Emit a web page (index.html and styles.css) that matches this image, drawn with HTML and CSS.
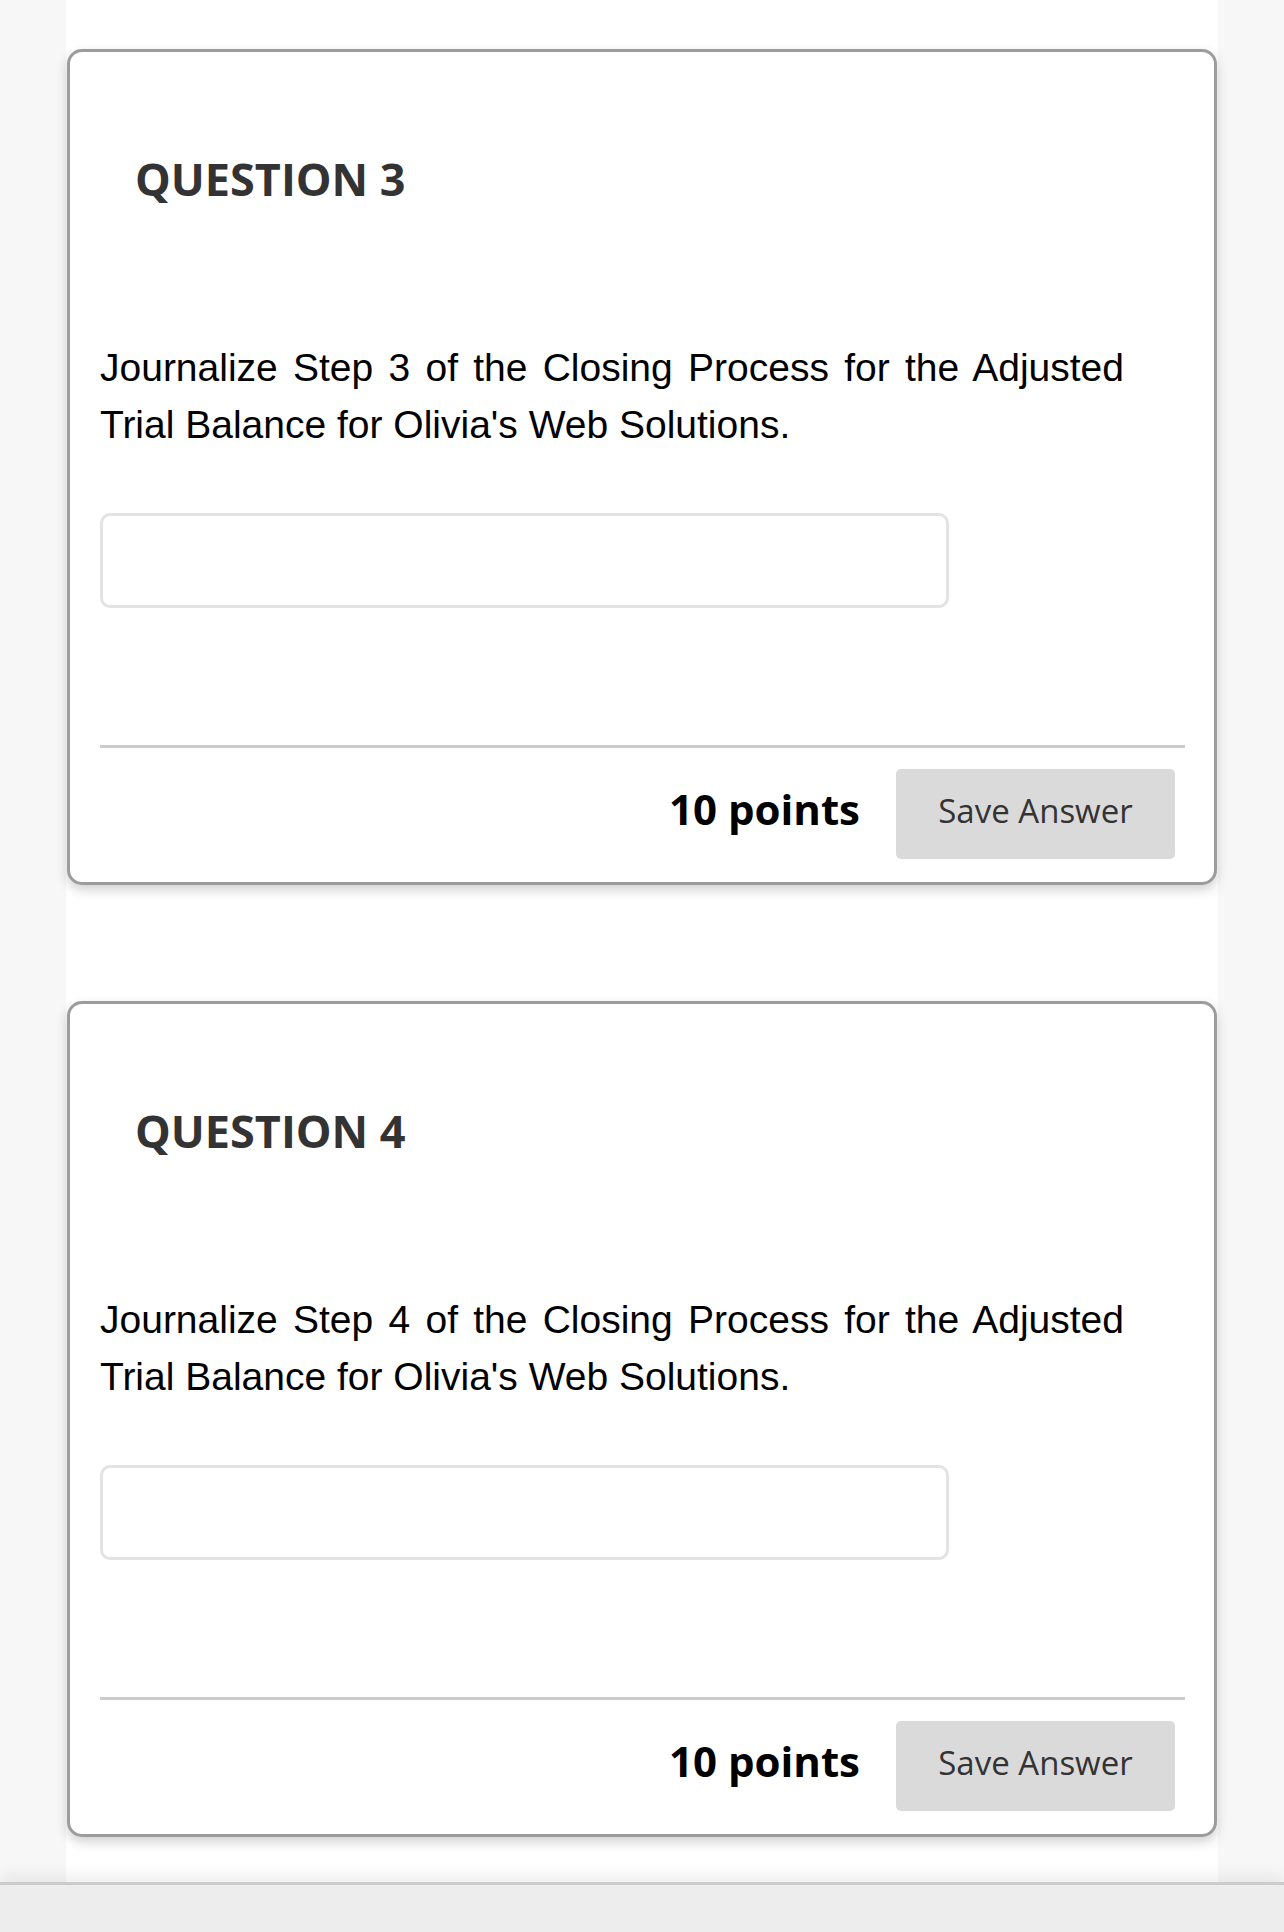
FILE: index.html
```html
<!DOCTYPE html>
<html lang="en">
<head>
<meta charset="utf-8">
<title>Questions</title>
<link rel="stylesheet" href="styles.css">
</head>
<body>
<div class="page">
  <section class="card">
    <h2 class="qtitle">QUESTION 3</h2>
    <p class="qtext">Journalize Step 3 of the Closing Process for the Adjusted Trial Balance for Olivia's Web Solutions.</p>
    <input class="answer" type="text" aria-label="Answer 3">
    <div class="divider"></div>
    <div class="footer">
      <span class="points">10 points</span>
      <button class="save" type="button">Save Answer</button>
    </div>
  </section>
  <section class="card">
    <h2 class="qtitle">QUESTION 4</h2>
    <p class="qtext">Journalize Step 4 of the Closing Process for the Adjusted Trial Balance for Olivia's Web Solutions.</p>
    <input class="answer" type="text" aria-label="Answer 4">
    <div class="divider"></div>
    <div class="footer">
      <span class="points">10 points</span>
      <button class="save" type="button">Save Answer</button>
    </div>
  </section>
</div>
<div class="bottombar"></div>
</body>
</html>
```
FILE: styles.css
```css
html, body {
  margin: 0;
  padding: 0;
}
body {
  background: #f7f7f7;
  font-family: "Open Sans", "DejaVu Sans", sans-serif;
}
.page {
  width: 1152px;
  margin-left: 66px;
  background: #fff;
  padding: 49px 1px 45px;
  box-sizing: border-box;
}
.card {
  background: #fff;
  border: 3px solid #9c9c9c;
  border-radius: 15px;
  box-shadow: 0 5px 12px rgba(0, 0, 0, 0.18);
  padding: 0 29px 23px 30px;
}
.card + .card {
  margin-top: 116px;
}
.qtitle {
  margin: 97px 0 0 35px;
  font-size: 45px;
  line-height: 60px;
  font-weight: 700;
  color: #333;
}
.qtext {
  margin: 130px 0 0;
  width: 1024px;
  font-family: "Liberation Sans", Arial, sans-serif;
  font-size: 39px;
  line-height: 57px;
  text-align: justify;
  color: #000;
}
.answer {
  display: block;
  margin: 60px 0 0;
  width: 849px;
  height: 95px;
  border: 3px solid #e3e3e3;
  border-radius: 10px;
  box-sizing: border-box;
  background: #fff;
  outline: none;
}
.divider {
  margin-top: 137px;
  border-top: 3px solid #cccccc;
}
.footer {
  display: flex;
  justify-content: flex-end;
  align-items: center;
  gap: 36px;
  padding: 21px 10px 0 0;
}
.points {
  font-size: 42px;
  font-weight: 700;
  color: #000;
  margin-bottom: 11px;
}
.save {
  width: 279px;
  height: 90px;
  background: #dadada;
  border: none;
  border-radius: 5px;
  font-family: "Open Sans", sans-serif;
  font-size: 33px;
  color: #333;
  padding: 0 0 7px;
}
.bottombar {
  border-top: 3px solid #cccccc;
  background: #ededed;
  height: 60px;
  box-shadow: 0 -8px 14px rgba(0, 0, 0, 0.06);
  position: relative;
}
```
